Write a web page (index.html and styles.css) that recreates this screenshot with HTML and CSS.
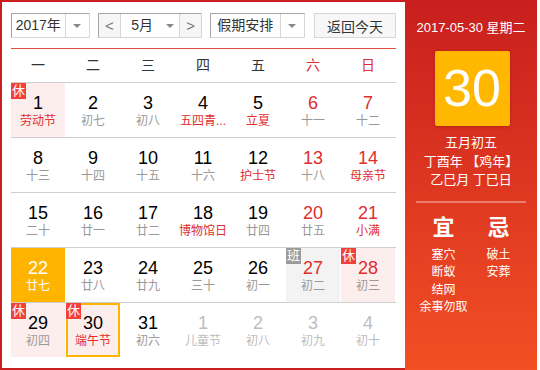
FILE: index.html
```html
<!DOCTYPE html>
<html lang="zh-CN">
<head>
    <meta charset="UTF-8">
    <title>万年历</title>
    <link rel="stylesheet" href="styles.css">
</head>
<body>
<div class="calendar">
    <div class="main">
        <div class="toolbar">
            <div class="select year-select">
                <span class="select-text">2017年</span>
                <span class="select-arrow"><i class="tri"></i></span>
            </div>
            <div class="select month-select">
                <span class="nav-btn">&lt;</span>
                <span class="select-text">5月</span>
                <span class="inline-arrow"><i class="tri"></i></span>
                <span class="nav-btn next">&gt;</span>
            </div>
            <div class="select holiday-select">
                <span class="select-text">假期安排</span>
                <span class="select-arrow"><i class="tri"></i></span>
            </div>
            <button class="today-btn">返回今天</button>
        </div>

        <div class="week-head">
            <span>一</span><span>二</span><span>三</span><span>四</span><span>五</span>
            <span class="weekend">六</span><span class="weekend">日</span>
        </div>

        <div class="grid" id="grid"></div>
    </div>

    <div class="side">
        <div class="side-date">2017-05-30 星期二</div>
        <div class="big-day">30</div>
        <div class="lunar-info">
            <div>五月初五</div>
            <div>丁酉年 【鸡年】</div>
            <div>乙巳月 丁巳日</div>
        </div>
        <div class="side-line"></div>
        <div class="almanac">
            <div class="almanac-col">
                <div class="almanac-title">宜</div>
                <div>塞穴</div>
                <div>断蚁</div>
                <div>结网</div>
                <div>余事勿取</div>
            </div>
            <div class="almanac-col">
                <div class="almanac-title">忌</div>
                <div>破土</div>
                <div>安葬</div>
            </div>
        </div>
    </div>
</div>

<script>
    // day, lunar text, flags, badge
    const days = [
        [1, "劳动节", "holiday fest", "休"],
        [2, "初七"], [3, "初八"], [4, "五四青...", "fest"], [5, "立夏", "fest"],
        [6, "十一", "weekend"], [7, "十二", "weekend"],
        [8, "十三"], [9, "十四"], [10, "十五"], [11, "十六"], [12, "护士节", "fest"],
        [13, "十八", "weekend"], [14, "母亲节", "weekend fest"],
        [15, "二十"], [16, "廿一"], [17, "廿二"], [18, "博物馆日", "fest"], [19, "廿四"],
        [20, "廿五", "weekend"], [21, "小满", "weekend fest"],
        [22, "廿七", "selected"], [23, "廿八"], [24, "廿九"], [25, "三十"], [26, "初一"],
        [27, "初二", "weekend work", "班"], [28, "初三", "weekend holiday", "休"],
        [29, "初四", "holiday", "休"], [30, "端午节", "holiday today fest", "休"], [31, "初六"],
        [1, "儿童节", "other"], [2, "初八", "other"], [3, "初九", "other"], [4, "初十", "other"]
    ];

    const grid = document.getElementById("grid");
    let html = "";
    for (let r = 0; r < 5; r++) {
        html += '<div class="row">';
        for (let c = 0; c < 7; c++) {
            const [num, lunar, flags = "", badge] = days[r * 7 + c];
            const cls = flags.split(" ").filter(Boolean).map(f => "is-" + f).join(" ");
            const badgeHtml = badge
                ? `<span class="badge ${badge === "班" ? "badge-work" : ""}">${badge}</span>`
                : "";
            html += `<div class="cell ${cls}">${badgeHtml}<div class="num">${num}</div><div class="lunar">${lunar}</div></div>`;
        }
        html += "</div>";
    }
    grid.innerHTML = html;
</script>
</body>
</html>
```

FILE: styles.css
```css
body {
    margin: 0;
    font-family: "Liberation Sans", "Noto Sans CJK SC", sans-serif;
    color: #333;
}
.calendar {
    display: flex;
    width: 537px;
    height: 370px;
    box-sizing: border-box;
    border: 2px solid #c91f1f;
    border-right: none;
}
.main {
    width: 403px;
    padding: 11px 9px 0 9px;
    box-sizing: border-box;
    background: #fff;
}
.toolbar {
    display: flex;
    height: 25px;
    gap: 8px;
    padding-bottom: 10px;
    border-bottom: 1px solid #e0513f;
}
.select {
    display: flex;
    height: 25px;
    box-sizing: border-box;
    border: 1px solid;
    border-color: #a5a5a5 #d6d6d6 #d6d6d6 #a5a5a5;
    font-size: 14px;
    line-height: 23px;
    color: #333;
    background: #fff;
}
.select-text {
    text-align: center;
}
.select-arrow {
    width: 24px;
    border-left: 1px solid #d6d6d6;
    display: flex;
    align-items: center;
    justify-content: center;
}
.tri {
    width: 0;
    height: 0;
    border-left: 4px solid transparent;
    border-right: 4px solid transparent;
    border-top: 4px solid #888;
}
.year-select {
    width: 79px;
}
.year-select .select-text {
    width: 54px;
}
.month-select {
    width: 104px;
}
.month-select .select-text {
    width: 36px;
    padding-left: 4px;
}
.inline-arrow {
    width: 20px;
    display: flex;
    align-items: center;
    justify-content: center;
}
.nav-btn {
    width: 21px;
    text-align: center;
    background: #f6f6f6;
    border-right: 1px solid #d6d6d6;
    color: #777;
    font-size: 15px;
}
.nav-btn.next {
    border-right: none;
    border-left: 1px solid #d6d6d6;
}
.holiday-select {
    width: 95px;
}
.holiday-select .select-text {
    width: 70px;
}
.today-btn {
    width: 82px;
    height: 25px;
    margin-left: 1px;
    border: 1px solid #d6d6d6;
    background: #f7f7f7;
    font-family: inherit;
    font-size: 14px;
    color: #333;
    padding: 0;
}
.week-head {
    display: grid;
    grid-template-columns: repeat(7, 54px);
    column-gap: 1px;
    height: 33px;
    line-height: 33px;
    text-align: center;
    font-size: 14px;
    color: #333;
}
.week-head .weekend {
    color: #e02d2d;
}
.row {
    display: grid;
    grid-template-columns: repeat(7, 54px);
    column-gap: 1px;
    border-top: 1px solid #cfcfcf;
}
.cell {
    position: relative;
    height: 54px;
    box-sizing: border-box;
    padding-top: 10px;
    text-align: center;
}
.num {
    font-size: 18px;
    line-height: 20px;
    color: #000;
}
.lunar {
    font-size: 12px;
    line-height: 16px;
    color: #999;
    white-space: nowrap;
}
.is-weekend .num {
    color: #e02d2d;
}
.is-fest .lunar {
    color: #e02d2d;
}
.is-holiday {
    background: #fdeeee;
}
.is-work {
    background: #f3f3f3;
}
.is-today {
    box-shadow: inset 0 0 0 2px #ffb400;
}
.is-selected {
    background: #ffb400;
}
.is-selected .num,
.is-selected .lunar {
    color: #fff;
}
.is-other .num,
.is-other .lunar {
    color: #bdbdbd;
}
.badge {
    position: absolute;
    top: 0;
    left: 0;
    width: 15px;
    height: 16px;
    line-height: 16px;
    font-size: 13px;
    color: #fff;
    background: #f2403a;
    text-align: center;
}
.badge-work {
    background: #9b9b9b;
}
.side {
    width: 132px;
    margin: -2px 0 -2px 0;
    background: linear-gradient(to bottom, #c81f1e, #f24f24);
    color: #fff;
    display: flex;
    flex-direction: column;
    align-items: center;
}
.side-date {
    margin-top: 19px;
    font-size: 13px;
    line-height: 18px;
}
.big-day {
    width: 75px;
    height: 75px;
    margin-top: 14px;
    margin-left: 2px;
    background: #ffb700;
    border-radius: 2px;
    box-shadow: 0 1px 3px rgba(120, 20, 0, 0.35);
    font-size: 52px;
    line-height: 75px;
    text-align: center;
}
.lunar-info {
    margin-top: 8px;
    font-size: 13px;
    line-height: 18.5px;
    text-align: center;
}
.side-line {
    width: 110px;
    height: 2px;
    margin-top: 11px;
    background: rgba(255, 255, 255, 0.35);
}
.almanac {
    display: flex;
    width: 110px;
    margin-top: 12px;
}
.almanac-col {
    width: 55px;
    text-align: center;
    font-size: 12px;
    line-height: 17.5px;
    white-space: nowrap;
}
.almanac-title {
    font-size: 22px;
    font-weight: bold;
    line-height: 26px;
    margin-bottom: 6px;
}
```
